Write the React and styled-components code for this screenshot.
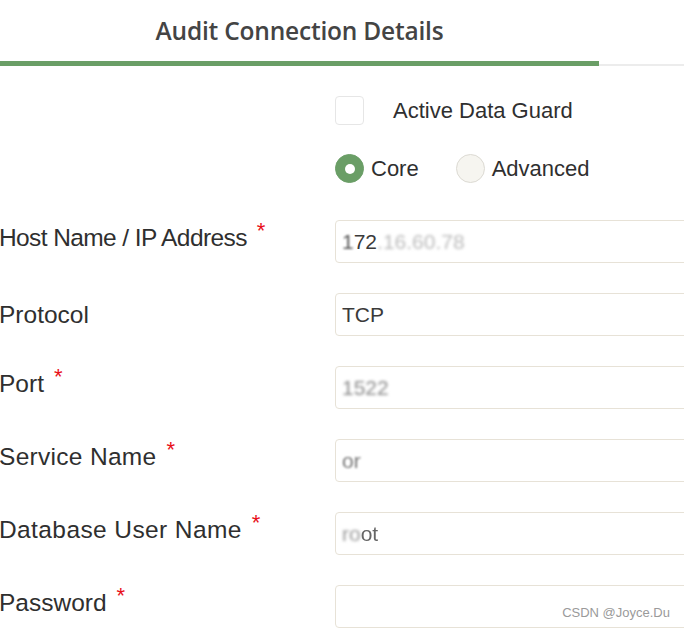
import React from "react";
import styled, { createGlobalStyle } from "styled-components";

const GlobalStyle = createGlobalStyle`
  html, body {
    margin: 0;
    padding: 0;
    background: #ffffff;
    overflow: hidden;
  }
  body {
    font-family: "Liberation Sans", Arial, sans-serif;
    color: #2f2f2f;
  }
`;

const Page = styled.div`
  position: relative;
  width: 684px;
  height: 630px;
  overflow: hidden;
  background: #fff;
`;

const TabBar = styled.div`
  display: flex;
  align-items: flex-end;
  height: 66px;
`;

const Tab = styled.div`
  width: 599px;
  height: 66px;
  box-sizing: border-box;
  border-bottom: 5px solid #6a9e66;
  display: flex;
  justify-content: center;
  align-items: center;
  padding-bottom: 1px;
`;

const TabTitle = styled.span`
  font-family: "Open Sans", "Noto Sans", sans-serif;
  font-weight: 600;
  font-size: 24.5px;
  color: #444444;
  letter-spacing: -0.2px;
`;

const TabFiller = styled.div`
  flex: 1;
  height: 2px;
  background: #ececec;
`;

const Form = styled.div`
  display: flex;
  flex-direction: column;
  padding-top: 30px;
`;

const OptionRow = styled.div`
  display: flex;
  align-items: center;
  padding-left: 335px;
  height: 29px;
  margin-bottom: ${(p) => p.$mb || 0}px;
`;

const CheckBox = styled.span`
  width: 29px;
  height: 29px;
  box-sizing: border-box;
  border: 1px solid #e6e6e6;
  border-radius: 4px;
  background: #fff;
  margin-right: 29px;
`;

const OptionText = styled.span`
  font-size: 22px;
  color: #2f2f2f;
  margin-right: ${(p) => p.$mr || 0}px;
`;

const Radio = styled.span`
  width: 29px;
  height: 29px;
  box-sizing: border-box;
  border-radius: 50%;
  margin-right: 7px;
  display: flex;
  align-items: center;
  justify-content: center;
  background: ${(p) => (p.$checked ? "#6a9e66" : "#f6f5f0")};
  border: 1px solid ${(p) => (p.$checked ? "#6a9e66" : "#dcdad3")};
  &::after {
    content: "";
    display: ${(p) => (p.$checked ? "block" : "none")};
    width: 10px;
    height: 10px;
    border-radius: 50%;
    background: #fff;
  }
`;

const Fields = styled.div`
  display: flex;
  flex-direction: column;
  gap: 30px;
  margin-top: 37px;
`;

const FieldRow = styled.div`
  display: grid;
  grid-template-columns: 335px 420px;
  align-items: center;
  height: 43px;
`;

const Label = styled.div`
  font-size: 24.5px;
  color: #2f2f2f;
  white-space: nowrap;
  margin-left: -1px;
  letter-spacing: ${(p) => p.$spacing || 0}px;
  margin-top: ${(p) => (p.$required ? "-7px" : "0")};
`;

const Star = styled.span`
  color: #e8101a;
  font-size: 22px;
  margin-left: 10px;
  letter-spacing: 0;
  position: relative;
  top: -8px;
`;

const Input = styled.div`
  height: 43px;
  box-sizing: border-box;
  border: 1px solid #e7e2d7;
  border-radius: 4px;
  background: #fff;
  display: flex;
  align-items: center;
  padding-left: 6px;
  font-size: 21px;
  color: #3a3a3a;
`;

const Masked = styled.span`
  filter: blur(${(p) => p.$blur || 1.4}px);
  color: ${(p) => p.$color || "#9a9a9a"};
`;

const Watermark = styled.div`
  position: absolute;
  right: 14px;
  bottom: 10px;
  font-size: 13px;
  color: #9a9a9a;
  font-family: "Liberation Sans", Arial, sans-serif;
`;

const fields = [
  {
    label: "Host Name / IP Address",
    required: true,
    spacing: -0.6,
    value: (
      <>
        <Masked $color="#555" $blur={1}>1</Masked>72
        <Masked $color="#bbb">.16.60.78</Masked>
      </>
    ),
  },
  { label: "Protocol", required: false, value: "TCP" },
  {
    label: "Port",
    required: true,
    value: <Masked $color="#888">1522</Masked>,
  },
  {
    label: "Service Name",
    required: true,
    spacing: 0.3,
    value: <Masked $color="#777" $blur={1}>or</Masked>,
  },
  {
    label: "Database User Name",
    required: true,
    spacing: 0.4,
    value: (
      <>
        <Masked $color="#999">ro</Masked>
        <Masked $color="#666" $blur={0.6}>ot</Masked>
      </>
    ),
  },
  { label: "Password", required: true, value: "" },
];

export default function App() {
  return (
    <>
      <GlobalStyle />
      <Page>
        <TabBar>
          <Tab>
            <TabTitle>Audit Connection Details</TabTitle>
          </Tab>
          <TabFiller />
        </TabBar>
        <Form>
          <OptionRow $mb={29}>
            <CheckBox />
            <OptionText>Active Data Guard</OptionText>
          </OptionRow>
          <OptionRow>
            <Radio $checked />
            <OptionText $mr={37}>Core</OptionText>
            <Radio />
            <OptionText>Advanced</OptionText>
          </OptionRow>
          <Fields>
            {fields.map((f) => (
              <FieldRow key={f.label}>
                <Label $required={f.required} $spacing={f.spacing}>
                  {f.label}
                  {f.required && <Star>*</Star>}
                </Label>
                <Input>{f.value}</Input>
              </FieldRow>
            ))}
          </Fields>
        </Form>
        <Watermark>CSDN @Joyce.Du</Watermark>
      </Page>
    </>
  );
}
